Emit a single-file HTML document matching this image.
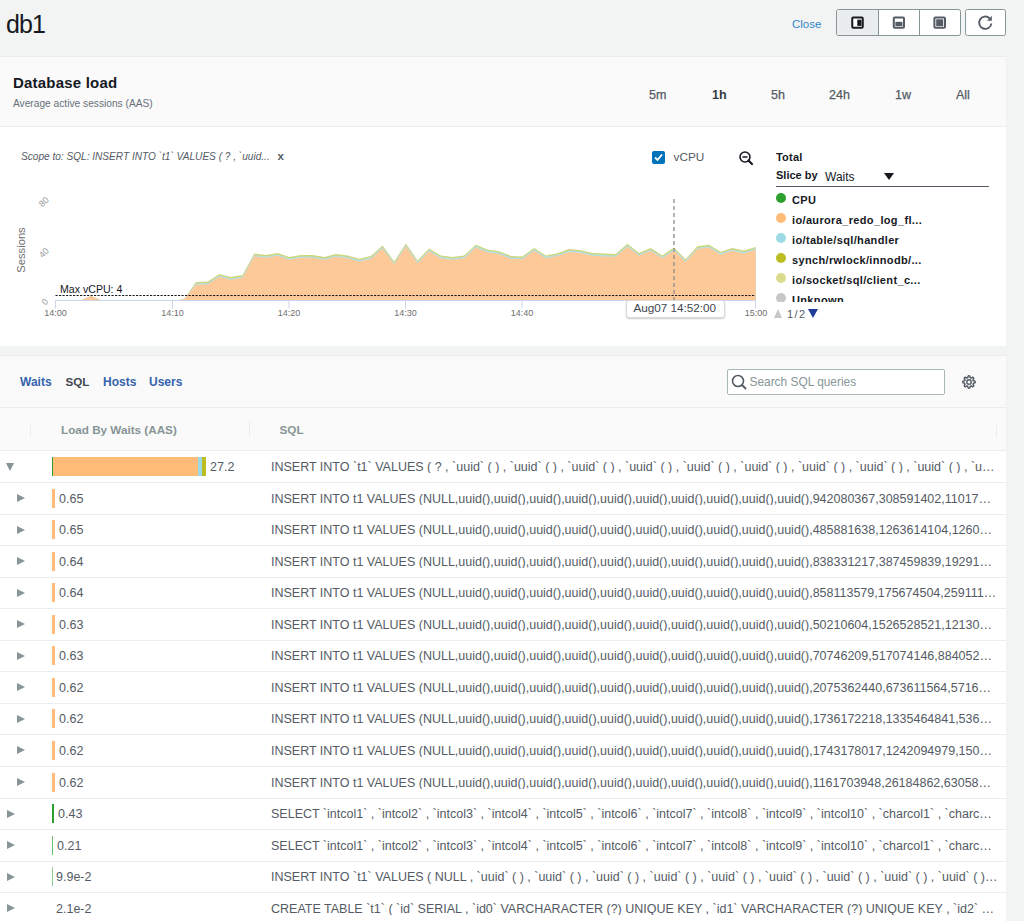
<!DOCTYPE html>
<html><head><meta charset="utf-8">
<style>
*{box-sizing:border-box;margin:0;padding:0}
html,body{width:1024px;height:921px;overflow:hidden;background:#f2f3f3;font-family:"Liberation Sans",sans-serif;color:#16191f;position:relative}
.a{position:absolute;line-height:1;white-space:nowrap}
#title{left:6px;top:11.5px;font-size:25px;letter-spacing:-0.9px;color:#16191f}
#close{left:792px;top:19.4px;font-size:11.5px;color:#2f87c9}
.bgrp{position:absolute;left:836px;top:9px;width:125px;height:27px;border:1px solid #879596;border-radius:2px;background:#fff;overflow:hidden}
.bgrp .seg{position:absolute;top:0;height:25px;width:41px;border-right:1px solid #879596}
.brf{position:absolute;left:964px;top:9px;width:42px;height:27px;border:1px solid #879596;border-radius:2px;background:#fff}
#p1{position:absolute;left:0;top:56px;width:1006px;height:290px;background:#fff;border-top:1px solid #eaeded}
#p1h{position:absolute;left:0;top:0;width:1006px;height:70px;background:#fafafa;border-bottom:1px solid #eaeded}
#p2{position:absolute;left:0;top:355px;width:1006px;height:600px;background:#fff;border-top:1px solid #eaeded}
.tabs{position:absolute;left:0;top:0;width:1006px;height:52px;background:#fafafa;border-bottom:1px solid #eaeded}
.thead{position:absolute;left:0;top:52px;width:1006px;height:43px;background:#fafafa;border-bottom:1px solid #eaeded}
.row{position:absolute;left:0;width:1006px;height:32px;border-bottom:1px solid #eaeded;background:#fff}
.row .tri{position:absolute;top:11px;width:0;height:0;border-top:4.5px solid transparent;border-bottom:4.5px solid transparent;border-left:8px solid #879596}
.row .bar{position:absolute;left:51.5px;top:6px;height:18.8px}
.row .val{position:absolute;top:9px;font-size:12.5px;color:#545b64;line-height:1}
.row .sql{position:absolute;left:271px;top:9px;width:727px;font-size:12.5px;color:#545b64;line-height:1;white-space:nowrap;overflow:hidden;text-overflow:ellipsis}
.lg{position:absolute;left:792px;font-size:11px;letter-spacing:0.35px;font-weight:bold;color:#16191f;line-height:1;white-space:nowrap}
.dot{position:absolute;left:775.5px;width:10px;height:10px;border-radius:50%}
</style></head><body>
<div class="a" id="title">db1</div>
<div class="a" id="close">Close</div>
<svg width="1024" height="40" style="position:absolute;left:0;top:0">
 <rect x="836.5" y="9.5" width="124" height="26" rx="2" fill="#fff" stroke="#879596"/>
 <path d="M838.5,10 H878 V35 H838.5 A2,2 0 0 1 837,33 V12 A2,2 0 0 1 838.5,10Z" fill="#eaeded"/>
 <line x1="878.5" y1="9.5" x2="878.5" y2="35.5" stroke="#879596"/>
 <line x1="919.5" y1="9.5" x2="919.5" y2="35.5" stroke="#879596"/>
 <rect x="965.5" y="9.5" width="40" height="26" rx="2" fill="#fff" stroke="#879596"/>
 <rect x="852.25" y="17.6" width="10.5" height="10.2" rx="1" fill="#fff" stroke="#16191f" stroke-width="2"/>
 <rect x="857.3" y="19.7" width="4.2" height="6.2" fill="#16191f"/>
 <rect x="893.8" y="17.6" width="10.2" height="10.2" rx="1" fill="#fff" stroke="#545b64" stroke-width="2"/>
 <rect x="895.4" y="21.8" width="7" height="4.3" fill="#545b64"/>
 <rect x="934.4" y="17.6" width="10.6" height="10.2" rx="1" fill="#fff" stroke="#545b64" stroke-width="2"/>
 <rect x="936.2" y="19.3" width="7" height="6.8" fill="#545b64"/>
 <path d="M991.4,23.5 A6.15,6.15 0 1 1 989.5,18.2" fill="none" stroke="#545b64" stroke-width="1.9"/>
 <path d="M987,20.8 H991.8 V15.8 Z" fill="#545b64"/>
</svg>
<div id="p1">
 <div id="p1h">
  <div class="a" style="left:13px;top:18.2px;font-size:15px;letter-spacing:0.2px;font-weight:bold;color:#16191f">Database load</div>
  <div class="a" style="left:13px;top:42px;font-size:10.2px;color:#687078">Average active sessions (AAS)</div>
  <div class="a" style="left:649px;top:31.6px;font-size:12.5px;color:#545b64;-webkit-text-stroke:0.25px #545b64">5m</div>
  <div class="a" style="left:712px;top:31.6px;font-size:12.5px;font-weight:bold;color:#353a42">1h</div>
  <div class="a" style="left:771px;top:31.6px;font-size:12.5px;color:#545b64;-webkit-text-stroke:0.25px #545b64">5h</div>
  <div class="a" style="left:829px;top:31.6px;font-size:12.5px;color:#545b64;-webkit-text-stroke:0.25px #545b64">24h</div>
  <div class="a" style="left:895px;top:31.6px;font-size:12.5px;color:#545b64;-webkit-text-stroke:0.25px #545b64">1w</div>
  <div class="a" style="left:956px;top:31.6px;font-size:12.5px;color:#545b64;-webkit-text-stroke:0.25px #545b64">All</div>
 </div>
</div>

<svg width="1024" height="346" style="position:absolute;left:0;top:0">
 <path d="M56.1,301 L56.1,301.0 L67.8,301.0 L79.4,301.0 L91.1,296.0 L102.7,301.0 L114.4,301.0 L126.1,301.0 L137.7,301.0 L149.4,301.0 L161.0,301.0 L172.7,301.0 L184.3,299.0 L196.0,282.0 L207.7,281.5 L219.3,274.0 L231.0,277.0 L242.6,275.0 L254.3,253.5 L265.9,255.0 L277.6,253.0 L289.3,257.0 L300.9,255.0 L312.6,255.0 L324.2,257.0 L335.9,254.0 L347.6,255.5 L359.2,258.7 L370.9,256.0 L382.5,245.4 L394.2,261.5 L405.9,243.6 L417.5,260.4 L429.2,248.4 L440.8,255.4 L452.5,257.0 L464.1,255.4 L475.8,244.7 L487.5,249.4 L499.1,251.2 L510.8,255.9 L522.4,256.5 L534.1,247.9 L545.8,255.4 L557.4,253.3 L569.1,249.1 L580.7,250.2 L592.4,253.0 L604.0,253.6 L615.7,254.0 L627.4,243.7 L639.0,253.0 L650.7,248.0 L662.3,255.5 L674.0,247.6 L685.6,259.2 L697.3,246.3 L709.0,244.8 L720.6,251.7 L732.3,248.0 L743.9,250.6 L755.6,246.9 L755.6,301Z" fill="#cdd679"/>
 <path d="M56.1,301 L56.1,301.0 L67.8,301.0 L79.4,301.0 L91.1,296.0 L102.7,301.0 L114.4,301.0 L126.1,301.0 L137.7,301.0 L149.4,301.0 L161.0,301.0 L172.7,301.0 L184.3,299.0 L196.0,283.4 L207.7,282.9 L219.3,275.4 L231.0,278.4 L242.6,276.4 L254.3,254.9 L265.9,256.4 L277.6,254.4 L289.3,258.4 L300.9,256.4 L312.6,256.4 L324.2,258.4 L335.9,255.4 L347.6,256.9 L359.2,260.1 L370.9,257.4 L382.5,246.8 L394.2,262.9 L405.9,245.0 L417.5,261.8 L429.2,249.8 L440.8,256.8 L452.5,258.4 L464.1,256.8 L475.8,246.1 L487.5,250.8 L499.1,252.6 L510.8,257.3 L522.4,257.9 L534.1,249.3 L545.8,256.8 L557.4,254.7 L569.1,250.5 L580.7,251.6 L592.4,254.4 L604.0,255.0 L615.7,255.4 L627.4,245.1 L639.0,254.4 L650.7,249.4 L662.3,256.9 L674.0,249.0 L685.6,260.6 L697.3,247.7 L709.0,246.2 L720.6,253.1 L732.3,249.4 L743.9,252.0 L755.6,248.3 L755.6,301Z" fill="#b4e0e6"/>
 <path d="M56.1,301 L56.1,301.0 L67.8,301.0 L79.4,301.0 L91.1,296.0 L102.7,301.0 L114.4,301.0 L126.1,301.0 L137.7,301.0 L149.4,301.0 L161.0,301.0 L172.7,301.0 L184.3,299.0 L196.0,284.8 L207.7,284.3 L219.3,276.8 L231.0,279.8 L242.6,277.8 L254.3,256.3 L265.9,257.8 L277.6,255.8 L289.3,259.8 L300.9,257.8 L312.6,257.8 L324.2,259.8 L335.9,256.8 L347.6,258.3 L359.2,261.5 L370.9,258.8 L382.5,248.2 L394.2,264.3 L405.9,246.4 L417.5,263.2 L429.2,251.2 L440.8,258.2 L452.5,259.8 L464.1,258.2 L475.8,247.5 L487.5,252.2 L499.1,254.0 L510.8,258.7 L522.4,259.3 L534.1,250.7 L545.8,258.2 L557.4,256.1 L569.1,251.9 L580.7,253.0 L592.4,255.8 L604.0,256.4 L615.7,256.8 L627.4,246.5 L639.0,255.8 L650.7,250.8 L662.3,258.3 L674.0,250.4 L685.6,262.0 L697.3,249.1 L709.0,247.6 L720.6,254.5 L732.3,250.8 L743.9,253.4 L755.6,249.7 L755.6,301Z" fill="#fec999"/>
 
 <g stroke="#ccd6eb" stroke-width="1">
  <line x1="55.5" y1="300.5" x2="55.5" y2="308.5"/><line x1="172.5" y1="300.5" x2="172.5" y2="308.5"/><line x1="289" y1="300.5" x2="289" y2="308.5"/>
  <line x1="405.5" y1="300.5" x2="405.5" y2="308.5"/><line x1="522" y1="300.5" x2="522" y2="308.5"/><line x1="638.5" y1="300.5" x2="638.5" y2="308.5"/><line x1="755.5" y1="300.5" x2="755.5" y2="308.5"/>
 </g>
 <line x1="55.5" y1="300.5" x2="756" y2="300.5" stroke="#ccd6eb" stroke-width="1"/>
 <line x1="55.5" y1="295.5" x2="755.5" y2="295.5" stroke="#16191f" stroke-width="1.2" stroke-dasharray="2.2,1.3"/>
 <line x1="674" y1="199" x2="674" y2="301" stroke="#8d8d8d" stroke-width="1.3" stroke-dasharray="4,3"/>
 <g font-family="Liberation Sans" font-size="9" fill="#707070">
  <text x="55.5" y="315.6" text-anchor="middle">14:00</text>
  <text x="172.5" y="315.6" text-anchor="middle">14:10</text>
  <text x="289" y="315.6" text-anchor="middle">14:20</text>
  <text x="405.5" y="315.6" text-anchor="middle">14:30</text>
  <text x="522" y="315.6" text-anchor="middle">14:40</text>
  <text x="756" y="315.6" text-anchor="middle">15:00</text>
  <text transform="translate(47,304) rotate(-45)" text-anchor="middle" fill="#9a9a9a">0</text>
  <text transform="translate(46,255) rotate(-45)" text-anchor="middle" fill="#9a9a9a">40</text>
  <text transform="translate(46,204) rotate(-45)" text-anchor="middle" fill="#9a9a9a">80</text>
 </g>
 <text transform="translate(24.5,250) rotate(-90)" text-anchor="middle" font-family="Liberation Sans" font-size="11.2" fill="#707070">Sessions</text>
 <text x="60" y="293" font-family="Liberation Sans" font-size="10.6" fill="#16191f">Max vCPU: 4</text>
</svg>
<div style="position:absolute;left:626px;top:300px;width:99px;height:18px;background:#fff;border:1px solid #d5dbdb;border-radius:3px;box-shadow:0 1px 2px rgba(0,0,0,.2)"></div>
<div class="a" style="left:633.5px;top:302px;font-size:11.7px;color:#414750">Aug07 14:52:00</div>

<div class="a" style="left:21px;top:152.2px;font-size:10.1px;font-style:italic;color:#545b64">Scope to: SQL: INSERT INTO `t1` VALUES ( ? , `uuid...</div>
<div class="a" style="left:277.5px;top:151.3px;font-size:11.5px;font-weight:bold;color:#545b64">x</div>

<div style="position:absolute;left:652px;top:151px;width:13px;height:13px;background:#0073bb;border-radius:2px"><svg width="13" height="13" style="position:absolute;left:0;top:0"><path d="M3,6.5 L5.5,9 L10,3.5" fill="none" stroke="#fff" stroke-width="1.8"/></svg></div>
<div class="a" style="left:673.5px;top:152px;font-size:11.8px;color:#545b64">vCPU</div>
<svg width="20" height="20" style="position:absolute;left:737px;top:149px"><circle cx="8" cy="8" r="5" fill="none" stroke="#16191f" stroke-width="1.6"/><line x1="5.5" y1="8" x2="10.5" y2="8" stroke="#16191f" stroke-width="1.5"/><line x1="11.5" y1="11.5" x2="15" y2="15" stroke="#16191f" stroke-width="2.2" stroke-linecap="round"/></svg>

<div class="a" style="left:776px;top:152.3px;font-size:11px;letter-spacing:0.2px;font-weight:bold;color:#16191f">Total</div>
<div class="a" style="left:776px;top:170.1px;font-size:11px;font-weight:bold;color:#16191f">Slice by</div>
<div class="a" style="left:825px;top:171px;font-size:12px;color:#16191f">Waits</div>
<div style="position:absolute;left:883.5px;top:173px;width:0;height:0;border-left:5px solid transparent;border-right:5px solid transparent;border-top:7px solid #16191f"></div>
<div style="position:absolute;left:776px;top:185.5px;width:213px;height:1.5px;background:#545b64"></div>

<div style="position:absolute;left:770px;top:190px;width:220px;height:112px;overflow:hidden">
 <div class="dot" style="left:5.5px;top:3px;background:#2ca02c"></div><div class="lg" style="left:22px;top:4.5px">CPU</div>
 <div class="dot" style="left:5.5px;top:23px;background:#ffbb78"></div><div class="lg" style="left:22px;top:24.5px">io/aurora_redo_log_fl...</div>
 <div class="dot" style="left:5.5px;top:43px;background:#9edae5"></div><div class="lg" style="left:22px;top:44.5px">io/table/sql/handler</div>
 <div class="dot" style="left:5.5px;top:63px;background:#bcbd22"></div><div class="lg" style="left:22px;top:64.5px">synch/rwlock/innodb/...</div>
 <div class="dot" style="left:5.5px;top:83px;background:#dbdb8d"></div><div class="lg" style="left:22px;top:84.5px">io/socket/sql/client_c...</div>
 <div class="dot" style="left:5.5px;top:103px;background:#c7c7c7"></div><div class="lg" style="left:22px;top:104.5px">Unknown</div>
</div>
<div style="position:absolute;left:774px;top:309px;width:0;height:0;border-left:4.5px solid transparent;border-right:4.5px solid transparent;border-bottom:9px solid #c7c7c7"></div>
<div class="a" style="left:787px;top:308.5px;font-size:11px;word-spacing:-1.6px;color:#545b64">1 / 2</div>
<div style="position:absolute;left:808px;top:309px;width:0;height:0;border-left:5px solid transparent;border-right:5px solid transparent;border-top:9px solid #1f3d99"></div>

<div id="p2">
 <div class="tabs">
  <div class="a" style="left:20px;top:20.3px;font-size:12px;font-weight:bold;color:#3563ad">Waits</div>
  <div class="a" style="left:65.5px;top:20.3px;font-size:11.6px;font-weight:bold;color:#414750">SQL</div>
  <div class="a" style="left:103px;top:20.3px;font-size:12px;font-weight:bold;color:#3563ad">Hosts</div>
  <div class="a" style="left:149px;top:20.3px;font-size:12px;font-weight:bold;color:#3563ad">Users</div>
  <div style="position:absolute;left:726.5px;top:13px;width:218.5px;height:26px;background:#fff;border:1px solid #aab7b8;border-radius:2px"></div>
  <svg width="20" height="20" style="position:absolute;left:730px;top:16.5px"><circle cx="8" cy="8" r="5.5" fill="none" stroke="#545b64" stroke-width="1.6"/><line x1="12" y1="12" x2="16" y2="16" stroke="#545b64" stroke-width="2"/></svg>
  <div class="a" style="left:749.5px;top:20.5px;font-size:11.9px;color:#879596">Search SQL queries</div>
  <svg width="18" height="18" style="position:absolute;left:959.8px;top:17px"><circle cx="9" cy="9" r="2.2" fill="none" stroke="#545b64" stroke-width="1.4"/><path d="M9.00,2.85 L9.40,2.86 L9.78,3.07 L10.03,3.80 L10.20,4.54 L10.43,4.79 L10.70,4.89 L10.97,5.01 L11.31,5.00 L11.94,4.59 L12.64,4.26 L13.05,4.38 L13.35,4.65 L13.62,4.95 L13.74,5.36 L13.41,6.06 L13.00,6.69 L12.99,7.03 L13.11,7.30 L13.21,7.57 L13.46,7.80 L14.20,7.97 L14.93,8.22 L15.14,8.60 L15.15,9.00 L15.14,9.40 L14.93,9.78 L14.20,10.03 L13.46,10.20 L13.21,10.43 L13.11,10.70 L12.99,10.97 L13.00,11.31 L13.41,11.94 L13.74,12.64 L13.62,13.05 L13.35,13.35 L13.05,13.62 L12.64,13.74 L11.94,13.41 L11.31,13.00 L10.97,12.99 L10.70,13.11 L10.43,13.21 L10.20,13.46 L10.03,14.20 L9.78,14.93 L9.40,15.14 L9.00,15.15 L8.60,15.14 L8.22,14.93 L7.97,14.20 L7.80,13.46 L7.57,13.21 L7.30,13.11 L7.03,12.99 L6.69,13.00 L6.06,13.41 L5.36,13.74 L4.95,13.62 L4.65,13.35 L4.38,13.05 L4.26,12.64 L4.59,11.94 L5.00,11.31 L5.01,10.97 L4.89,10.70 L4.79,10.43 L4.54,10.20 L3.80,10.03 L3.07,9.78 L2.86,9.40 L2.85,9.00 L2.86,8.60 L3.07,8.22 L3.80,7.97 L4.54,7.80 L4.79,7.57 L4.89,7.30 L5.01,7.03 L5.00,6.69 L4.59,6.06 L4.26,5.36 L4.38,4.95 L4.65,4.65 L4.95,4.38 L5.36,4.26 L6.06,4.59 L6.69,5.00 L7.03,5.01 L7.30,4.89 L7.57,4.79 L7.80,4.54 L7.97,3.80 L8.22,3.07 L8.60,2.86Z" fill="none" stroke="#545b64" stroke-width="1.5" stroke-linejoin="round"/></svg>
 </div>
 <div class="thead">
  <div style="position:absolute;left:30px;top:17px;width:1px;height:12px;background:#eaeded"></div>
  <div class="a" style="left:61px;top:15.5px;font-size:11.7px;font-weight:bold;color:#879596">Load By Waits (AAS)</div>
  <div style="position:absolute;left:249px;top:13px;width:1px;height:16px;background:#eaeded"></div>
  <div class="a" style="left:279.5px;top:15.5px;font-size:11.7px;font-weight:bold;color:#879596">SQL</div>
  <div style="position:absolute;left:996px;top:17px;width:1px;height:12px;background:#eaeded"></div>
 </div>
</div>
<div class="row" style="top:451px;height:32px"><div style="position:absolute;left:6px;top:11.7px;width:0;height:0;border-left:4.8px solid transparent;border-right:4.8px solid transparent;border-top:8px solid #879596"></div><div class="bar" style="top:5.9px;width:154.5px;background:linear-gradient(90deg,#2ca02c 0,#2ca02c 1px,#ffbb78 1px,#ffbb78 146.5px,#9edae5 146.5px,#9edae5 149.7px,#bcbd22 149.7px)"></div><div class="val" style="left:210px;top:9.9px">27.2</div><div class="sql" style="top:9.9px">INSERT INTO `t1` VALUES ( ? , `uuid` ( ) , `uuid` ( ) , `uuid` ( ) , `uuid` ( ) , `uuid` ( ) , `uuid` ( ) , `uuid` ( ) , `uuid` ( ) , `uuid` ( ) , `uuid` ( ) , `uuid` ( )</div></div>
<div class="row" style="top:483px;height:32px"><div class="tri" style="left:17px;top:11.0px"></div><div class="bar" style="top:5.9px;width:3.8px;background:#ffbb78"></div><div class="val" style="left:59px;top:9.9px">0.65</div><div class="sql" style="top:9.9px">INSERT INTO t1 VALUES (NULL,uuid(),uuid(),uuid(),uuid(),uuid(),uuid(),uuid(),uuid(),uuid(),uuid(),942080367,308591402,11017351234,1928374650,uuid()</div></div>
<div class="row" style="top:515px;height:31px"><div class="tri" style="left:17px;top:10.5px"></div><div class="bar" style="top:5.4px;width:3.8px;background:#ffbb78"></div><div class="val" style="left:59px;top:9.4px">0.65</div><div class="sql" style="top:9.4px">INSERT INTO t1 VALUES (NULL,uuid(),uuid(),uuid(),uuid(),uuid(),uuid(),uuid(),uuid(),uuid(),uuid(),485881638,1263614104,12607904,1928374650,uuid()</div></div>
<div class="row" style="top:546px;height:32px"><div class="tri" style="left:17px;top:11.0px"></div><div class="bar" style="top:5.9px;width:3.8px;background:#ffbb78"></div><div class="val" style="left:59px;top:9.9px">0.64</div><div class="sql" style="top:9.9px">INSERT INTO t1 VALUES (NULL,uuid(),uuid(),uuid(),uuid(),uuid(),uuid(),uuid(),uuid(),uuid(),uuid(),838331217,387459839,192912934,1928374650,uuid()</div></div>
<div class="row" style="top:578px;height:31px"><div class="tri" style="left:17px;top:10.5px"></div><div class="bar" style="top:5.4px;width:3.8px;background:#ffbb78"></div><div class="val" style="left:59px;top:9.4px">0.64</div><div class="sql" style="top:9.4px">INSERT INTO t1 VALUES (NULL,uuid(),uuid(),uuid(),uuid(),uuid(),uuid(),uuid(),uuid(),uuid(),uuid(),858113579,175674504,259111034,1928374650,uuid()</div></div>
<div class="row" style="top:609px;height:32px"><div class="tri" style="left:17px;top:11.0px"></div><div class="bar" style="top:5.9px;width:3.8px;background:#ffbb78"></div><div class="val" style="left:59px;top:9.9px">0.63</div><div class="sql" style="top:9.9px">INSERT INTO t1 VALUES (NULL,uuid(),uuid(),uuid(),uuid(),uuid(),uuid(),uuid(),uuid(),uuid(),uuid(),50210604,1526528521,121306124,1928374650,uuid()</div></div>
<div class="row" style="top:641px;height:31px"><div class="tri" style="left:17px;top:10.5px"></div><div class="bar" style="top:5.4px;width:3.8px;background:#ffbb78"></div><div class="val" style="left:59px;top:9.4px">0.63</div><div class="sql" style="top:9.4px">INSERT INTO t1 VALUES (NULL,uuid(),uuid(),uuid(),uuid(),uuid(),uuid(),uuid(),uuid(),uuid(),uuid(),70746209,517074146,8840524814,1928374650,uuid()</div></div>
<div class="row" style="top:672px;height:32px"><div class="tri" style="left:17px;top:11.0px"></div><div class="bar" style="top:5.9px;width:3.8px;background:#ffbb78"></div><div class="val" style="left:59px;top:9.9px">0.62</div><div class="sql" style="top:9.9px">INSERT INTO t1 VALUES (NULL,uuid(),uuid(),uuid(),uuid(),uuid(),uuid(),uuid(),uuid(),uuid(),uuid(),2075362440,673611564,57163124,1928374650,uuid()</div></div>
<div class="row" style="top:704px;height:31px"><div class="tri" style="left:17px;top:10.5px"></div><div class="bar" style="top:5.4px;width:3.8px;background:#ffbb78"></div><div class="val" style="left:59px;top:9.4px">0.62</div><div class="sql" style="top:9.4px">INSERT INTO t1 VALUES (NULL,uuid(),uuid(),uuid(),uuid(),uuid(),uuid(),uuid(),uuid(),uuid(),uuid(),1736172218,1335464841,5365124,1928374650,uuid()</div></div>
<div class="row" style="top:735px;height:32px"><div class="tri" style="left:17px;top:11.0px"></div><div class="bar" style="top:5.9px;width:3.8px;background:#ffbb78"></div><div class="val" style="left:59px;top:9.9px">0.62</div><div class="sql" style="top:9.9px">INSERT INTO t1 VALUES (NULL,uuid(),uuid(),uuid(),uuid(),uuid(),uuid(),uuid(),uuid(),uuid(),uuid(),1743178017,1242094979,1500124,1928374650,uuid()</div></div>
<div class="row" style="top:767px;height:32px"><div class="tri" style="left:17px;top:11.0px"></div><div class="bar" style="top:5.9px;width:3.8px;background:#ffbb78"></div><div class="val" style="left:59px;top:9.9px">0.62</div><div class="sql" style="top:9.9px">INSERT INTO t1 VALUES (NULL,uuid(),uuid(),uuid(),uuid(),uuid(),uuid(),uuid(),uuid(),uuid(),uuid(),1161703948,26184862,630587814,1928374650,uuid()</div></div>
<div class="row" style="top:799px;height:31px"><div class="tri" style="left:7px;top:10.5px"></div><div class="bar" style="top:5.4px;width:2px;background:#2ca02c"></div><div class="val" style="left:58px;top:9.4px">0.43</div><div class="sql" style="top:9.4px">SELECT `intcol1` , `intcol2` , `intcol3` , `intcol4` , `intcol5` , `intcol6` , `intcol7` , `intcol8` , `intcol9` , `intcol10` , `charcol1` , `charcol2`</div></div>
<div class="row" style="top:830px;height:32px"><div class="tri" style="left:7px;top:11.0px"></div><div class="bar" style="top:5.9px;width:1px;background:#6cbf6c"></div><div class="val" style="left:57px;top:9.9px">0.21</div><div class="sql" style="top:9.9px">SELECT `intcol1` , `intcol2` , `intcol3` , `intcol4` , `intcol5` , `intcol6` , `intcol7` , `intcol8` , `intcol9` , `intcol10` , `charcol1` , `charcol2`</div></div>
<div class="row" style="top:862px;height:31px"><div class="tri" style="left:7px;top:10.5px"></div><div class="bar" style="top:5.4px;width:1px;background:#8cce8c"></div><div class="val" style="left:56px;top:9.4px">9.9e-2</div><div class="sql" style="top:9.4px">INSERT INTO `t1` VALUES ( NULL , `uuid` ( ) , `uuid` ( ) , `uuid` ( ) , `uuid` ( ) , `uuid` ( ) , `uuid` ( ) , `uuid` ( ) , `uuid` ( ) , `uuid` ( ) , `uuid` ( ) , `uuid` ( ) , `uuid` ( ) , `uuid` ( )</div></div>
<div class="row" style="top:893px;height:32px"><div class="tri" style="left:7px;top:11.0px"></div><div class="val" style="left:56px;top:9.9px">2.1e-2</div><div class="sql" style="top:9.9px">CREATE TABLE `t1` ( `id` SERIAL , `id0` VARCHARACTER (?) UNIQUE KEY , `id1` VARCHARACTER (?) UNIQUE KEY , `id2` VARCHARACTER (?) UNIQUE KEY</div></div>
</body></html>
